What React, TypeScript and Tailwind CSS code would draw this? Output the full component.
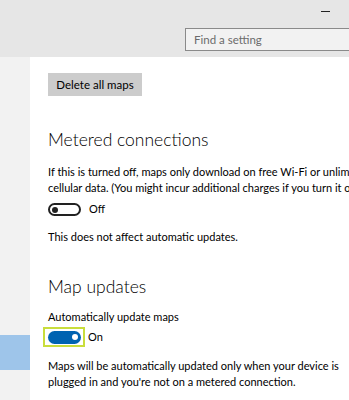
export default function App() {
  return (
    <div
      className="w-[349px] h-[400px] overflow-hidden bg-white flex flex-col text-black"
      style={{ fontFamily: "Lato, 'Noto Sans', sans-serif" }}
    >
      {/* Title bar + search */}
      <div className="h-[57px] shrink-0 bg-[#e6e6e6] flex flex-col overflow-hidden">
        <div className="h-[28px] flex justify-end pr-[19px] pt-[11px]">
          <div className="w-[9px] h-px bg-[#222]" />
        </div>
        <div className="ml-[185px] w-[200px] h-[23px] shrink-0 border border-[#8a8a8a] bg-[#f2f2f2] flex items-center pl-[8px]">
          <span className="text-[11.5px] text-[#6b6b6b]">Find a setting</span>
        </div>
      </div>

      <div className="flex flex-1">
        {/* Sidebar */}
        <div className="w-[30px] shrink-0 bg-[#f2f2f2] flex flex-col">
          <div className="h-[278px]" />
          <div className="h-[35px] bg-[#9ec5ea]" />
        </div>

        {/* Content */}
        <div className="flex-1 pl-[18px] flex flex-col items-start">
          <button className="mt-[16px] h-[23px] w-[94px] bg-[#cccccc] text-[11.5px] leading-none">
            Delete all maps
          </button>

          <h2 className="mt-[32px] text-[17.5px] leading-[24px] font-light whitespace-nowrap">
            Metered connections
          </h2>
          <p className="mt-[12px] text-[11px] leading-[16px] whitespace-nowrap">
            If this is turned off, maps only download on free Wi-Fi or unlimited
            <br />
            cellular data. (You might incur additional charges if you turn it on.)
          </p>
          <div className="mt-[7px] h-[13px] flex items-center">
            <div className="w-[33px] h-[13px] rounded-full border-2 border-[#222] flex items-center pl-[2px]">
              <div className="w-[6px] h-[6px] rounded-full bg-[#222]" />
            </div>
            <span className="ml-[8px] text-[11px]">Off</span>
          </div>
          <p className="mt-[13px] text-[11px] leading-[16px]">This does not affect automatic updates.</p>

          <h2 className="mt-[30px] text-[17.5px] leading-[24px] font-light">Map updates</h2>
          <p className="mt-[10px] text-[11px] leading-[16px]">Automatically update maps</p>
          <div className="mt-[2px] flex items-center">
            <div className="-ml-[5px] w-[42px] h-[20px] border-2 border-[#c9dd3c] flex items-center pl-[3px]">
              <div className="w-[33px] h-[13px] rounded-full bg-[#0063b1] flex items-center justify-end pr-[3px]">
                <div className="w-[6px] h-[6px] rounded-full bg-white" />
              </div>
            </div>
            <span className="ml-[3px] text-[11px]">On</span>
          </div>
          <p className="mt-[11px] text-[11px] leading-[16px] whitespace-nowrap">
            Maps will be automatically updated only when your device is
            <br />
            plugged in and you're not on a metered connection.
          </p>
        </div>
      </div>
    </div>
  );
}
